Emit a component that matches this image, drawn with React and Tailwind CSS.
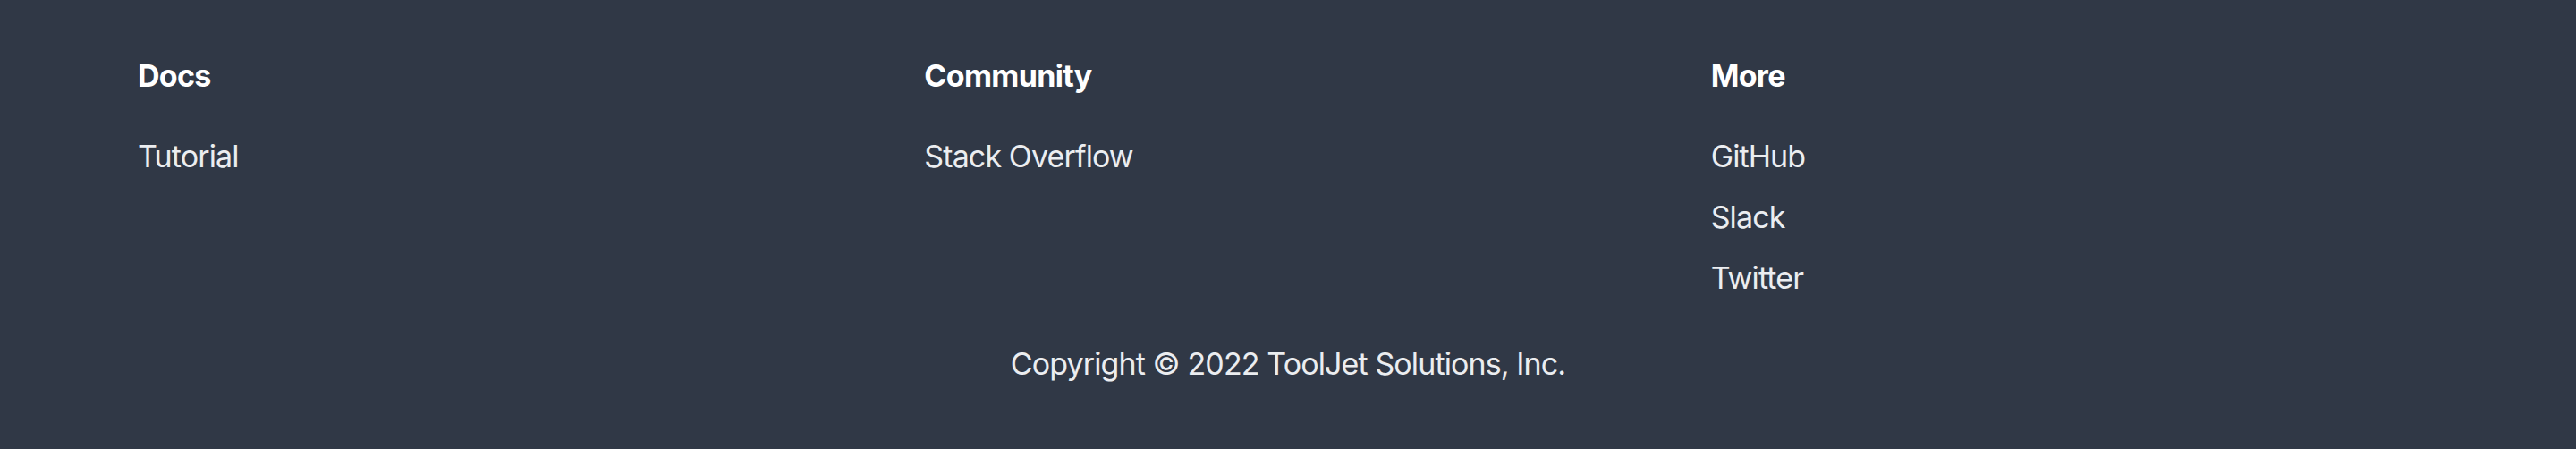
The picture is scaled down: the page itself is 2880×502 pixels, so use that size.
import React from 'react';

const columns = [
  { title: 'Docs', items: ['Tutorial'] },
  { title: 'Community', items: ['Stack Overflow'] },
  { title: 'More', items: ['GitHub', 'Slack', 'Twitter'] },
];

const App = () => {
  return (
    <footer
      className="min-h-screen bg-[#303846] text-[#ebedf0] py-[64px] px-[32px] text-[34px] leading-[1.65] tracking-[-0.026em]"
      style={{ fontFamily: 'Inter, "Noto Sans", sans-serif' }}
    >
      <div className="max-w-[2640px] mx-auto px-[32px]">
        {/* Link columns */}
        <div className="grid grid-cols-3 -mx-[32px] mb-[34px] pl-[2px]">
          {columns.map((col) => (
            <div key={col.title} className="px-[32px]">
              <div className="font-bold text-white leading-[1.25] mb-[34px] tracking-[-0.02em]">{col.title}</div>
              <ul>
                {col.items.map((item) => (
                  <li key={item} className="leading-[2]">
                    <a href="#" className="text-[#ebedf0]">{item}</a>
                  </li>
                ))}
              </ul>
            </div>
          ))}
        </div>

        {/* Bottom */}
        <div className="text-center">
          <div>Copyright © 2022 ToolJet Solutions, Inc.</div>
        </div>
      </div>
    </footer>
  );
};

export default App;
